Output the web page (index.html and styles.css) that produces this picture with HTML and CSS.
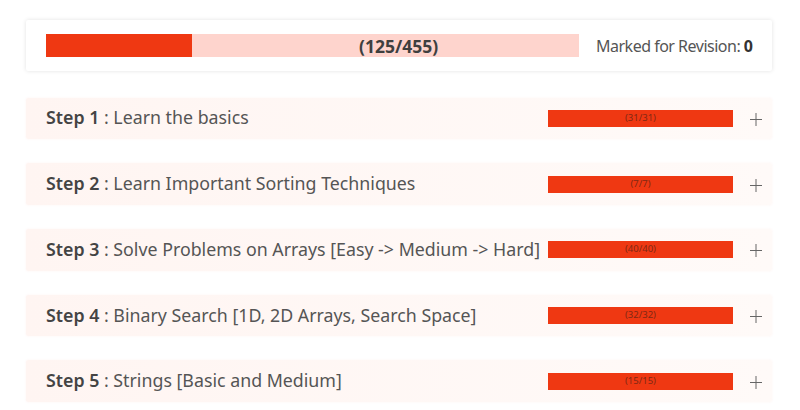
FILE: index.html
```html
<!DOCTYPE html>
<html lang="en">
<head>
    <meta charset="UTF-8">
    <meta name="viewport" content="width=device-width, initial-scale=1.0">
    <title>Course Sheet</title>
    <link rel="stylesheet" href="styles.css">
</head>
<body>

    <div class="sheet">
        <!-- Overall progress -->
        <div class="summary">
            <div class="summary-bar">
                <div class="summary-fill" style="width: 27.47%;"></div>
                <span class="summary-count">(125/455)</span>
            </div>
            <div class="revision">Marked for Revision: <b>0</b></div>
        </div>

        <!-- Steps -->
        <div class="step">
            <div class="step-title"><b>Step 1</b> : Learn the basics</div>
            <div class="step-bar">(31/31)</div>
            <svg class="plus" viewBox="0 0 12 13"><path d="M6 0V13M0 6.5H12"/></svg>
        </div>
        <div class="step">
            <div class="step-title"><b>Step 2</b> : Learn Important Sorting Techniques</div>
            <div class="step-bar">(7/7)</div>
            <svg class="plus" viewBox="0 0 12 13"><path d="M6 0V13M0 6.5H12"/></svg>
        </div>
        <div class="step">
            <div class="step-title"><b>Step 3</b> : Solve Problems on Arrays [Easy -&gt; Medium -&gt; Hard]</div>
            <div class="step-bar">(40/40)</div>
            <svg class="plus" viewBox="0 0 12 13"><path d="M6 0V13M0 6.5H12"/></svg>
        </div>
        <div class="step">
            <div class="step-title"><b>Step 4</b> : Binary Search [1D, 2D Arrays, Search Space]</div>
            <div class="step-bar">(32/32)</div>
            <svg class="plus" viewBox="0 0 12 13"><path d="M6 0V13M0 6.5H12"/></svg>
        </div>
        <div class="step">
            <div class="step-title"><b>Step 5</b> : Strings [Basic and Medium]</div>
            <div class="step-bar">(15/15)</div>
            <svg class="plus" viewBox="0 0 12 13"><path d="M6 0V13M0 6.5H12"/></svg>
        </div>
    </div>

</body>
</html>
```

FILE: styles.css
```css
body {
    font-family: "Noto Sans", Arial, sans-serif;
    background-color: #fff;
    color: #444;
    margin: 0;
    height: 410px;
    overflow: hidden;
}

.sheet {
    display: flex;
    flex-direction: column;
    gap: 24px;
    padding: 20px 28px 0 26px;
}

.summary {
    display: flex;
    align-items: center;
    height: 51px;
    box-sizing: border-box;
    padding-left: 20px;
    background-color: #fff;
    border-radius: 2px;
    box-shadow: 0 0 4px rgba(0, 0, 0, 0.12);
    margin-bottom: 2.6px;
}

.summary-bar {
    display: flex;
    align-items: center;
    width: 533px;
    height: 23px;
    background-color: #fed4cd;
}

.summary-fill {
    height: 100%;
    background-color: #ef3812;
}

.summary-count {
    flex: 1;
    padding-left: 26px;
    text-align: center;
    font-size: 17.5px;
    font-weight: 700;
    color: #3f3f3f;
}

.revision {
    margin-left: 17px;
    font-size: 16px;
    letter-spacing: -0.5px;
    color: #555;
    white-space: nowrap;
}

.revision b {
    color: #333;
}

.step {
    display: flex;
    align-items: center;
    height: 41.7px;
    padding-left: 20px;
    background: linear-gradient(to right, #fff5f2, #fffaf8);
    border-radius: 2px;
    box-shadow: 0 0 3px rgba(240, 54, 17, 0.05);
}

.step-title {
    flex: 1;
    font-size: 17.8px;
    line-height: 40px;
    margin-top: -2px;
    color: #555;
    white-space: nowrap;
}

.step-title b {
    font-weight: 600;
    color: #444;
}

.step-bar {
    width: 185px;
    height: 17px;
    line-height: 15px;
    text-align: center;
    font-size: 9.5px;
    color: #802814;
    background-color: #ef3812;
}

.plus {
    width: 12px;
    height: 13px;
    margin: 2px 10px 0 17px;
    fill: none;
    stroke: #666;
    stroke-width: 1;
}
```
